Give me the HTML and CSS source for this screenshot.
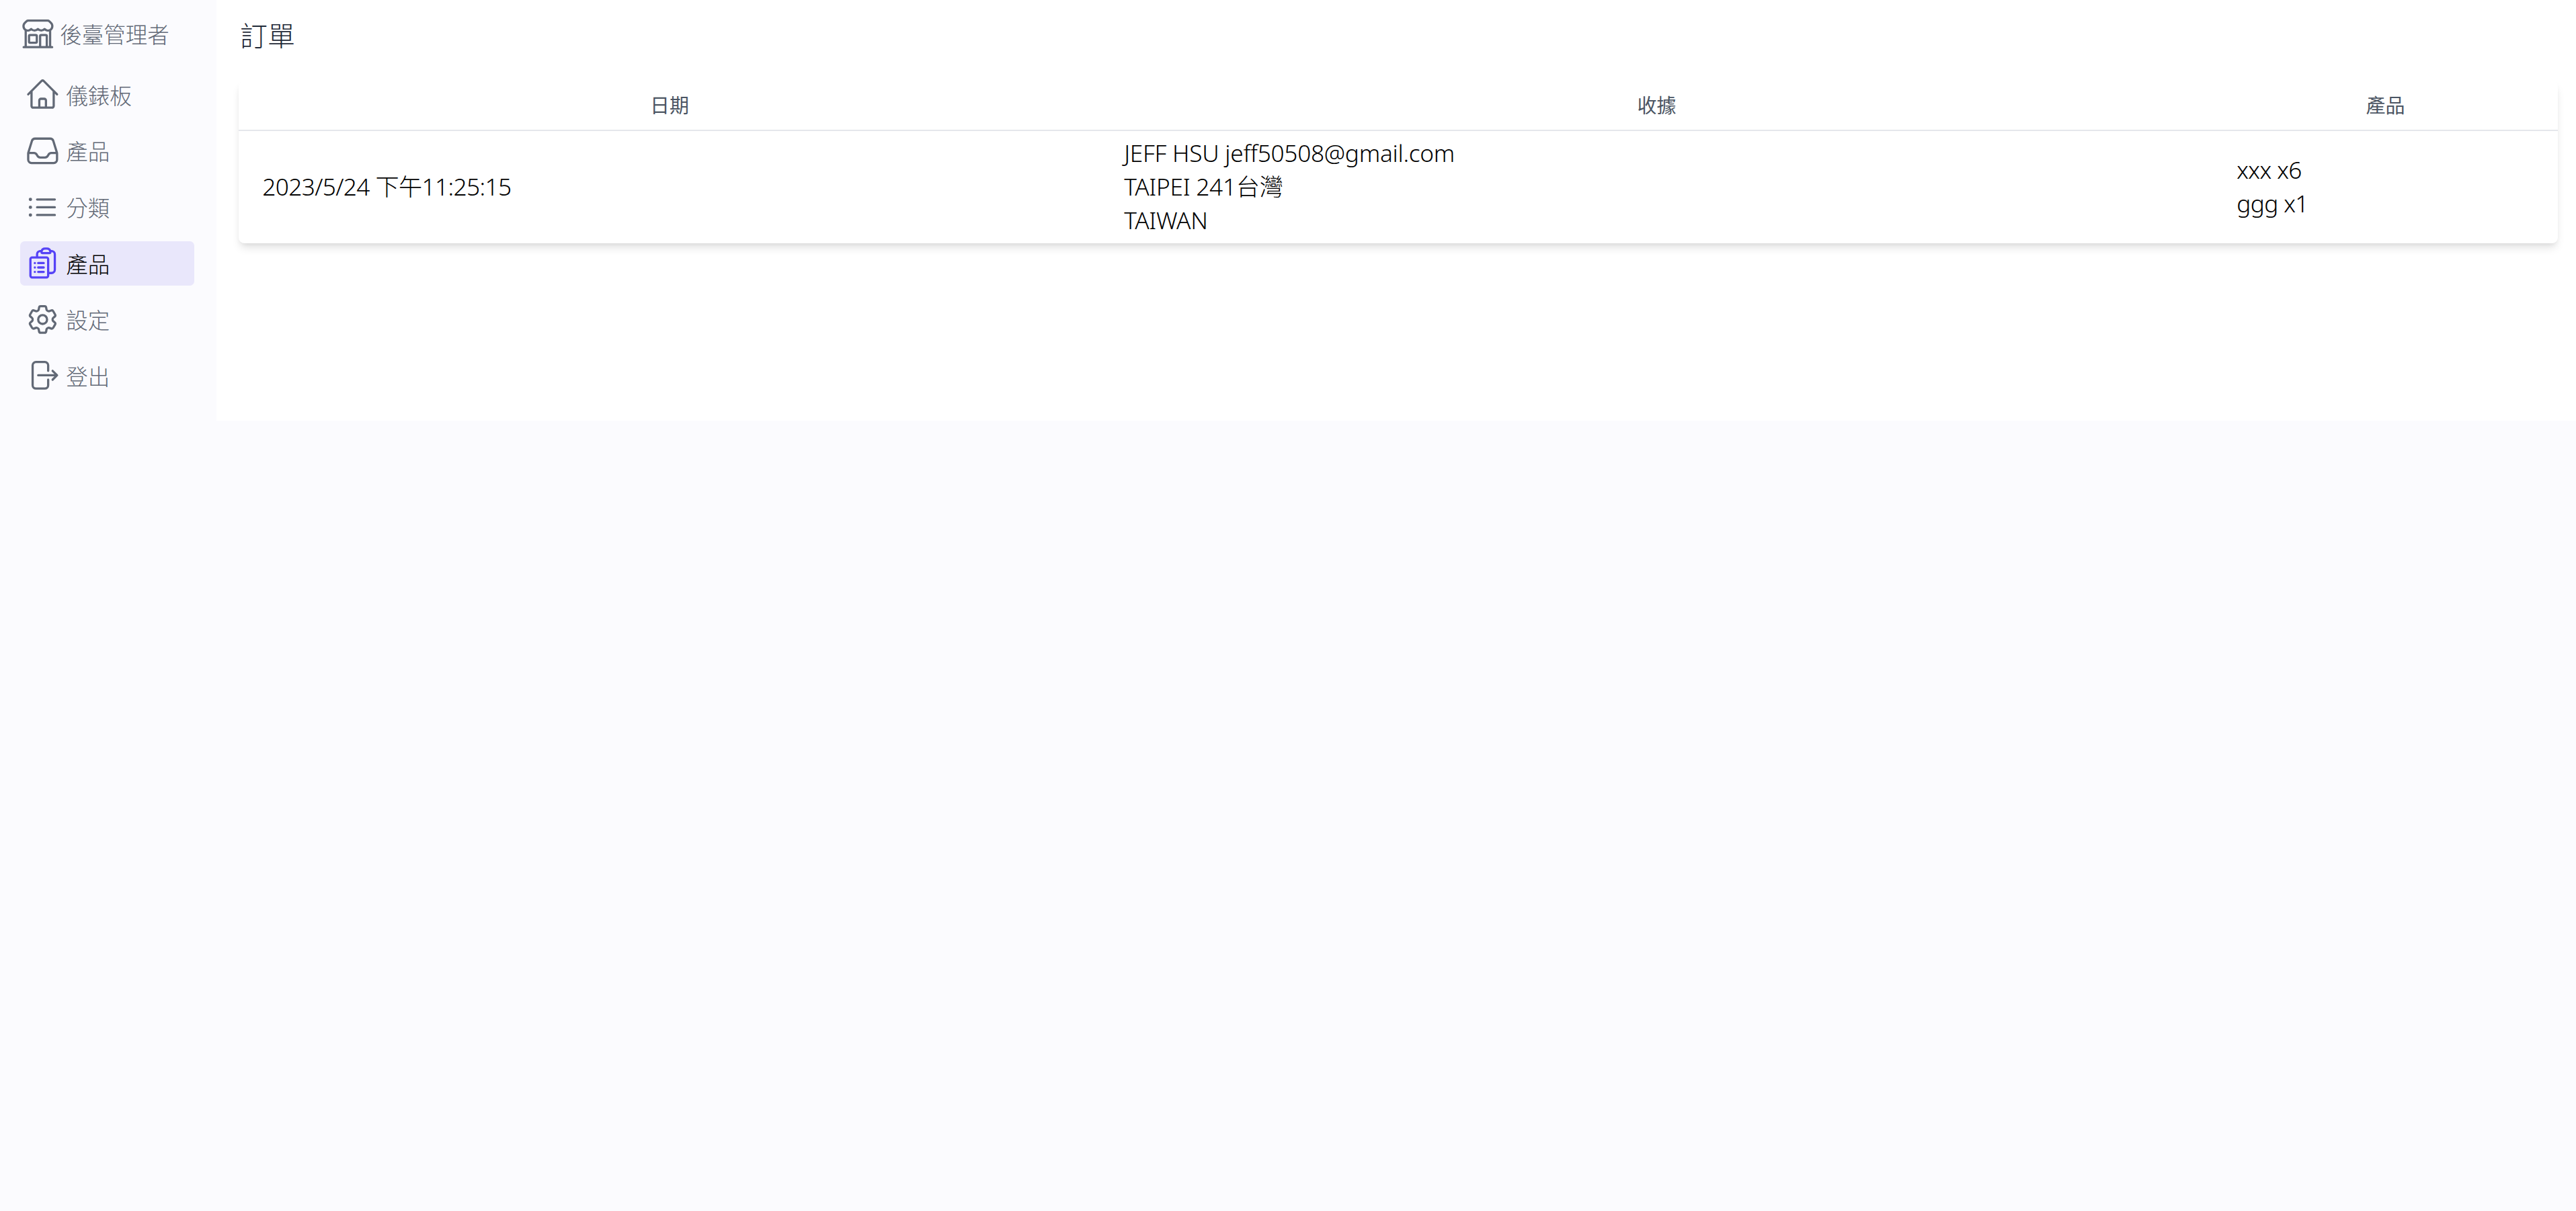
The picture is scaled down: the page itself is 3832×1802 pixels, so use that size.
FILE: index.html
```html
<!DOCTYPE html>
<html lang="zh-Hant">
<head>
<meta charset="utf-8">
<title>訂單</title>
<link rel="stylesheet" href="styles.css">
</head>
<body>
<div class="layout">
  <aside class="sidebar">
    <a class="brand" href="#">
      <svg class="icon" viewBox="0 0 24 24"><path d="M13.5 21v-7.5a.75.75 0 01.75-.75h3a.75.75 0 01.75.75V21m-4.5 0H2.36m11.14 0H18m0 0h3.64m-1.39 0V9.349m-16.5 11.65V9.35m0 0a3.001 3.001 0 003.75-.615A2.993 2.993 0 009.75 9.75c.896 0 1.7-.393 2.25-1.016a2.993 2.993 0 002.25 1.016c.896 0 1.7-.393 2.25-1.016a3.001 3.001 0 003.75.614m-16.5 0a3.004 3.004 0 01-.621-4.72L4.318 3.44A1.5 1.5 0 015.378 3h13.243a1.5 1.5 0 011.06.44l1.19 1.189a3 3 0 01-.621 4.72m-13.5 8.65h3.75a.75.75 0 00.75-.75V13.5a.75.75 0 00-.75-.75H6.75a.75.75 0 00-.75.75v3.75c0 .415.336.75.75.75z"/></svg>
      <span>後臺管理者</span>
    </a>
    <nav class="nav">
      <a class="nav-item" href="#">
        <svg class="icon" viewBox="0 0 24 24"><path d="M2.25 12l8.954-8.955c.44-.439 1.152-.439 1.591 0L21.75 12M4.5 9.75v10.125c0 .621.504 1.125 1.125 1.125H9.75v-4.875c0-.621.504-1.125 1.125-1.125h2.25c.621 0 1.125.504 1.125 1.125V21h4.125c.621 0 1.125-.504 1.125-1.125V9.75M8.25 21h8.25"/></svg>
        <span>儀錶板</span>
      </a>
      <a class="nav-item" href="#">
        <svg class="icon" viewBox="0 0 24 24"><path d="M2.25 13.5h3.86a2.25 2.25 0 012.012 1.244l.256.512a2.25 2.25 0 002.013 1.244h3.218a2.25 2.25 0 002.013-1.244l.256-.512a2.25 2.25 0 012.013-1.244h3.859m-19.5.338V18a2.25 2.25 0 002.25 2.25h15A2.25 2.25 0 0021.75 18v-4.162c0-.224-.034-.447-.1-.661L19.24 5.338a2.25 2.25 0 00-2.15-1.588H6.911a2.25 2.25 0 00-2.15 1.588L2.35 13.177a2.25 2.25 0 00-.1.661z"/></svg>
        <span>產品</span>
      </a>
      <a class="nav-item" href="#">
        <svg class="icon" viewBox="0 0 24 24"><path d="M8.25 6.75h12M8.25 12h12m-12 5.25h12M3.75 6.75h.007v.008H3.75V6.75zm.375 0a.375.375 0 11-.75 0 .375.375 0 01.75 0zM3.75 12h.007v.008H3.75V12zm.375 0a.375.375 0 11-.75 0 .375.375 0 01.75 0zm-.375 5.25h.007v.008H3.75v-.008zm.375 0a.375.375 0 11-.75 0 .375.375 0 01.75 0z"/></svg>
        <span>分類</span>
      </a>
      <a class="nav-item nav-item-active" href="#">
        <svg class="icon" viewBox="0 0 24 24"><path d="M9 12h3.75M9 15h3.75M9 18h3.75m3 .75H18a2.25 2.25 0 002.25-2.25V6.108c0-1.135-.845-2.098-1.976-2.192a48.424 48.424 0 00-1.123-.08m-5.801 0c-.065.21-.1.433-.1.664 0 .414.336.75.75.75h4.5a.75.75 0 00.75-.75 2.25 2.25 0 00-.1-.664m-5.8 0A2.251 2.251 0 0113.5 2.25H15c1.012 0 1.867.668 2.15 1.586m-5.8 0c-.376.023-.75.05-1.124.08C9.095 4.01 8.25 4.973 8.25 6.108V8.25m0 0H4.875c-.621 0-1.125.504-1.125 1.125v11.25c0 .621.504 1.125 1.125 1.125h9.75c.621 0 1.125-.504 1.125-1.125V9.375c0-.621-.504-1.125-1.125-1.125H8.25zM6.75 12h.008v.008H6.75V12zm0 3h.008v.008H6.75V15zm0 3h.008v.008H6.75V18z"/></svg>
        <span>產品</span>
      </a>
      <a class="nav-item" href="#">
        <svg class="icon" viewBox="0 0 24 24"><path d="M9.594 3.94c.09-.542.56-.94 1.11-.94h2.593c.55 0 1.02.398 1.11.94l.213 1.281c.063.374.313.686.645.87.074.04.147.083.22.127.324.196.72.257 1.075.124l1.217-.456a1.125 1.125 0 011.37.49l1.296 2.247a1.125 1.125 0 01-.26 1.431l-1.003.827c-.293.24-.438.613-.431.992a6.759 6.759 0 010 .255c-.007.378.138.75.43.99l1.005.828c.424.35.534.954.26 1.43l-1.298 2.247a1.125 1.125 0 01-1.369.491l-1.217-.456c-.355-.133-.75-.072-1.076.124a6.57 6.57 0 01-.22.128c-.331.183-.581.495-.644.869l-.213 1.28c-.09.543-.56.941-1.11.941h-2.594c-.55 0-1.02-.398-1.11-.94l-.213-1.281c-.062-.374-.312-.686-.644-.87a6.52 6.52 0 01-.22-.127c-.325-.196-.72-.257-1.076-.124l-1.217.456a1.125 1.125 0 01-1.369-.49l-1.297-2.247a1.125 1.125 0 01.26-1.431l1.004-.827c.292-.24.437-.613.43-.992a6.932 6.932 0 010-.255c.007-.378-.138-.75-.43-.99l-1.004-.828a1.125 1.125 0 01-.26-1.43l1.297-2.247a1.125 1.125 0 011.37-.491l1.216.456c.356.133.751.072 1.076-.124.072-.044.146-.087.22-.128.332-.183.582-.495.644-.869l.214-1.281z"/><path d="M15 12a3 3 0 11-6 0 3 3 0 016 0z"/></svg>
        <span>設定</span>
      </a>
      <a class="nav-item" href="#">
        <svg class="icon" viewBox="0 0 24 24"><path d="M15.75 9V5.25A2.25 2.25 0 0013.5 3h-6a2.25 2.25 0 00-2.25 2.25v13.5A2.25 2.25 0 007.5 21h6a2.25 2.25 0 002.25-2.25V15m3 0l3-3m0 0l-3-3m3 3H9"/></svg>
        <span>登出</span>
      </a>
    </nav>
  </aside>
  <main class="main">
    <h1 class="title">訂單</h1>
    <div class="card">
      <table class="orders">
        <colgroup>
          <col class="col-date">
          <col class="col-recipient">
          <col class="col-products">
        </colgroup>
        <thead>
          <tr><th>日期</th><th>收據</th><th>產品</th></tr>
        </thead>
        <tbody>
          <tr>
            <td>2023/5/24 下午11:25:15</td>
            <td class="cell-recipient">JEFF HSU jeff50508@gmail.com<br>TAIPEI 241台灣<br>TAIWAN</td>
            <td>xxx x6<br>ggg x1</td>
          </tr>
        </tbody>
      </table>
    </div>
  </main>
</div>
</body>
</html>
```

FILE: styles.css
```css
html, body {
  margin: 0;
  padding: 0;
  height: 100%;
}

body {
  background: #fbfbfe;
  font-family: "Noto Sans", "Noto Sans CJK TC", sans-serif;
  color: #000;
}

a {
  text-decoration: none;
  color: inherit;
}

.layout {
  display: flex;
  height: 626px;
}

.sidebar {
  box-sizing: border-box;
  flex: 0 0 322px;
  padding: 24px 33px 0 30px;
  background: #fbfbfe;
  color: #626976;
  font-size: 32.5px;
  font-weight: 300;
}

.icon {
  flex: none;
  width: 52.8px;
  height: 52.8px;
  fill: none;
  stroke: currentColor;
  stroke-width: 1.5;
  stroke-linecap: round;
  stroke-linejoin: round;
}

.brand {
  display: flex;
  align-items: center;
  gap: 6.5px;
  height: 52.8px;
}

.nav {
  display: flex;
  flex-direction: column;
  gap: 17.6px;
  margin-top: 31px;
}

.nav-item {
  display: flex;
  align-items: center;
  gap: 8.8px;
  padding: 6.6px;
  border-radius: 6.6px;
}

.nav-item-active {
  background: #e9e7fb;
  color: #000;
}

.nav-item-active .icon {
  color: #5542f6;
}

.main {
  box-sizing: border-box;
  flex: 1;
  min-width: 0;
  padding: 0 27px 0 33px;
  background: #fff;
}

.title {
  box-sizing: border-box;
  margin: 0;
  padding: 24px 0 0 2px;
  height: 120px;
  font-size: 41px;
  line-height: 58px;
  font-weight: 300;
  color: #1f2937;
}

.card {
  background: #fff;
  border-radius: 8.8px;
  box-shadow: 0 8.8px 13.2px -2.2px rgba(0, 0, 0, .1), 0 4.4px 8.8px -4.4px rgba(0, 0, 0, .1);
}

.orders {
  width: 100%;
  table-layout: fixed;
  border-collapse: collapse;
}

.col-date { width: 1282px; }
.col-recipient { width: 1655px; }
.col-products { width: 513px; }

.orders th {
  box-sizing: border-box;
  height: 74px;
  padding: 0 0 4px;
  border-bottom: 2.2px solid #e5e7eb;
  font-size: 29px;
  font-weight: 400;
  color: #4b5563;
  text-align: center;
}

.orders td {
  padding: 6.8px 35.2px 9.8px;
  font-size: 35.2px;
  font-weight: 300;
  letter-spacing: -0.6px;
  line-height: 50px;
  color: #000;
  vertical-align: middle;
}

.orders .cell-recipient {
  letter-spacing: -0.25px;
}
```
